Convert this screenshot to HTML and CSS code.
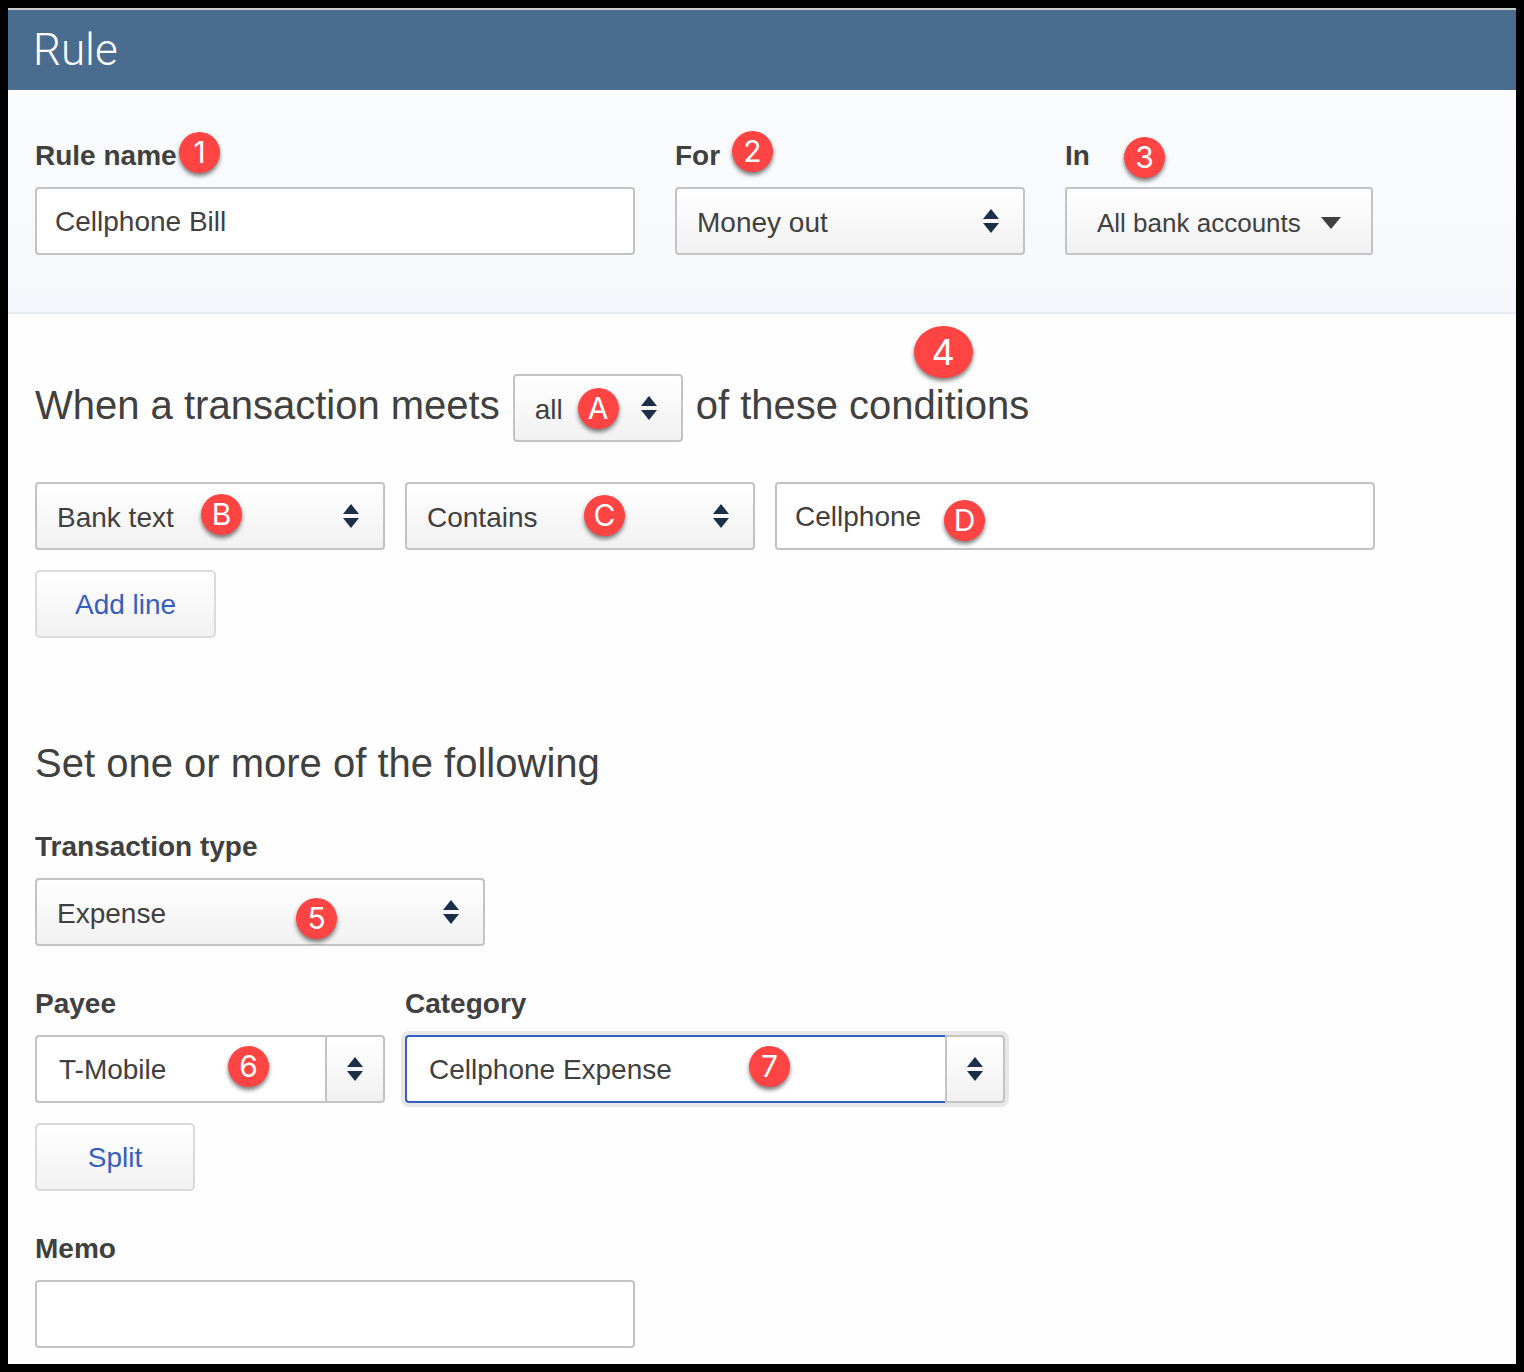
FILE: index.html
```html
<!DOCTYPE html>
<html lang="en">
  <head>
    <meta charset="UTF-8">
    <meta name="viewport" content="width=device-width, initial-scale=1.0">
    <title>Rule</title>

    <link rel="stylesheet" href="styles.css">
  </head>
  <body>
    <main class="rule">
      <header class="rule-header">
        <h1>Rule</h1>
      </header>

      <section class="rule-basics">
        <div class="field field-name">
          <label for="rule-name">Rule name</label>
          <input id="rule-name" class="control" type="text" value="Cellphone Bill">
          <span class="badge badge-1">1</span>
        </div>
        <div class="field field-medium">
          <label for="rule-for">For</label>
          <select id="rule-for" class="control select">
            <option>Money out</option>
            <option>Money in</option>
          </select>
          <span class="badge badge-2">2</span>
        </div>
        <div class="field">
          <label for="rule-in">In</label>
          <button id="rule-in" class="control menu-button" type="button">
            All bank accounts
            <svg width="20" height="12" viewBox="0 0 20 12" aria-hidden="true"><path d="M0 0h20L10 12z" fill="currentColor"/></svg>
          </button>
          <span class="badge badge-3">3</span>
        </div>
      </section>

      <section class="rule-body">
        <h2 class="sentence">
          <label for="match">When a transaction meets</label>
          <span class="field field-match">
            <select id="match" class="control select">
              <option>all</option>
              <option>any</option>
            </select>
            <span class="badge badge-a">A</span>
          </span>
          <span class="sentence-end">of these conditions<span class="badge badge-large badge-4">4</span></span>
        </h2>

        <div class="row">
          <div class="field field-medium">
            <select class="control select" aria-label="Condition field">
              <option>Bank text</option>
              <option>Description</option>
              <option>Amount</option>
            </select>
            <span class="badge badge-b">B</span>
          </div>
          <div class="field field-medium">
            <select class="control select" aria-label="Condition operator">
              <option>Contains</option>
              <option>Is exactly</option>
            </select>
            <span class="badge badge-c">C</span>
          </div>
          <div class="field field-name">
            <input class="control" type="text" value="Cellphone" aria-label="Condition value">
            <span class="badge badge-d">D</span>
          </div>
        </div>
        <button class="button" type="button">Add line</button>

        <h2 class="group-title">Set one or more of the following</h2>

        <div class="field field-type">
          <label for="type">Transaction type</label>
          <select id="type" class="control select">
            <option>Expense</option>
            <option>Transfer</option>
          </select>
          <span class="badge badge-5">5</span>
        </div>

        <div class="row row-spaced">
          <div class="field field-medium">
            <label for="payee">Payee</label>
            <div class="combo">
              <input id="payee" class="control" type="text" value="T-Mobile">
              <button class="control combo-toggle" type="button" aria-label="Show payees"></button>
            </div>
            <span class="badge badge-6">6</span>
          </div>
          <div class="field field-category">
            <label for="category">Category</label>
            <div class="combo combo-active">
              <input id="category" class="control" type="text" value="Cellphone Expense">
              <button class="control combo-toggle" type="button" aria-label="Show categories"></button>
            </div>
            <span class="badge badge-7">7</span>
          </div>
        </div>
        <button class="button" type="button">Split</button>

        <div class="field field-name field-spaced">
          <label for="memo">Memo</label>
          <input id="memo" class="control" type="text">
        </div>
      </section>
    </main>
  </body>
</html>
```

FILE: styles.css
```css
:root {
  --text: #404040;
  --border: #c3c3c3;
  --blue: #365ebf;
  --shade: linear-gradient(#ffffff, #f1f1f1);
  --arrows: url("data:image/svg+xml,%3Csvg xmlns='http://www.w3.org/2000/svg' width='16' height='24'%3E%3Cpath d='M8 0l8 10H0zM0 14h16L8 24z' fill='%231b2f49'/%3E%3C/svg%3E");
  font-family: "Liberation Sans", Arial, sans-serif;
  font-size: 28px;
  color: var(--text);
}

* {
  box-sizing: border-box;
}

body {
  margin: 0;
  padding: 8px;
  background-color: #000;
}

h1, h2 {
  margin: 0;
  font-weight: normal;
}

.rule {
  background-color: #fefefe;
}

.rule-header {
  padding: 10px 25px;
  border-top: 2px solid #c9c9c9;
  background-color: #4a6c8f;
  color: #fff;
}
.rule-header h1 {
  font-family: Roboto, "Liberation Sans", sans-serif;
  font-size: 44px;
  font-weight: 300;
  line-height: 60px;
}

.rule-basics {
  display: flex;
  flex-wrap: wrap;
  gap: 40px;
  padding: 48px 27px 57px;
  border-bottom: 2px solid #e5e9f4;
  background: linear-gradient(#fafcfd, #f6f7fc);
}

.rule-body {
  padding: 60px 27px 16px;
}

/* fields */
.field {
  position: relative;
  max-width: 100%;
}
.field > label {
  display: block;
  margin-bottom: 14px;
  font-weight: bold;
  line-height: 35px;
}
.field-name {
  width: 600px;
}
.field-medium {
  width: 350px;
}
.field-match {
  width: 170px;
}
.field-type {
  width: 450px;
}
.field-category {
  width: 600px;
}
.field-spaced,
.row-spaced {
  margin-top: 40px;
}

.row {
  display: flex;
  flex-wrap: wrap;
  gap: 20px;
}

.control {
  display: block;
  width: 100%;
  height: 68px;
  padding: 2px 18px 0;
  border: 2px solid var(--border);
  border-radius: 4px;
  background-color: #fff;
  color: var(--text);
  font: inherit;
  outline: none;
}
.select {
  appearance: none;
  padding: 2px 48px 0 20px;
  font-size: 28px;
  background: var(--arrows) no-repeat right 24px center, var(--shade);
}
.menu-button {
  display: flex;
  align-items: center;
  justify-content: space-between;
  min-width: 308px;
  padding: 4px 30px 0;
  border-radius: 3px;
  background: var(--shade);
  font-size: 26px;
}

.combo {
  display: flex;
  border-radius: 4px;
}
.combo input {
  flex: 1;
  min-width: 0;
  padding: 2px 22px 0;
  border-right: 0;
  border-radius: 4px 0 0 4px;
}
.combo-toggle {
  width: 60px;
  border-radius: 0 4px 4px 0;
  background: var(--arrows) no-repeat center, var(--shade);
}
.combo-active {
  box-shadow: 0 0 0 4px #e7e7e7;
}
.combo-active input {
  border-color: var(--blue);
}

.button {
  display: block;
  min-width: 160px;
  height: 68px;
  margin-top: 20px;
  padding: 2px 38px 0;
  border: 2px solid #dadada;
  border-radius: 5px;
  background: var(--shade);
  color: var(--blue);
  font: inherit;
}

/* headings */
.sentence {
  display: flex;
  flex-wrap: wrap;
  align-items: baseline;
  gap: 13px;
  margin-bottom: 40px;
  font-size: 40px;
}
.sentence-end {
  position: relative;
}
.group-title {
  margin: 100px 0 40px;
  font-size: 40px;
  line-height: 51px;
}

/* numbered callouts, laid over the form */
.badge {
  position: absolute;
  width: 41px;
  height: 41px;
  border-radius: 50%;
  background-color: #ff4444;
  box-shadow: 0 3px 4px rgba(0, 0, 0, .5);
  color: #fff;
  font-family: Inter, "Liberation Sans", sans-serif;
  font-size: 30px;
  line-height: 41px;
  text-align: center;
  pointer-events: none;
}
.badge-large {
  width: 59px;
  height: 52px;
  font-size: 36px;
  line-height: 52px;
}
.badge-1 { left: 144px; top: -6px; }
.badge-2 { left: 57px; top: -7px; }
.badge-3 { left: 59px; top: -1px; }
.badge-4 { left: 218px; top: -57px; }
.badge-a { left: 65px; top: 14px; }
.badge-b { left: 166px; top: 12px; }
.badge-c { left: 179px; top: 13px; }
.badge-d { left: 169px; top: 18px; }
.badge-5 { left: 261px; top: 69px; }
.badge-6 { left: 193px; top: 60px; }
.badge-7 { left: 344px; top: 60px; }
```
